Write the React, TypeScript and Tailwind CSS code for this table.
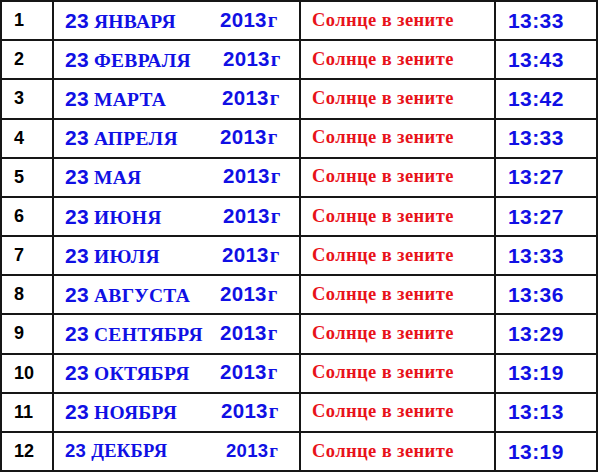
import React from "react";

type Row = { n: string; month: string; off: number; time: string };

const rows: Row[] = [
  { n: "1", month: "ЯНВАРЯ", off: 0, time: "13:33" },
  { n: "2", month: "ФЕВРАЛЯ", off: 3, time: "13:43" },
  { n: "3", month: "МАРТА", off: 2, time: "13:42" },
  { n: "4", month: "АПРЕЛЯ", off: 0, time: "13:33" },
  { n: "5", month: "МАЯ", off: 3, time: "13:27" },
  { n: "6", month: "ИЮНЯ", off: 3, time: "13:27" },
  { n: "7", month: "ИЮЛЯ", off: 2, time: "13:33" },
  { n: "8", month: "АВГУСТА", off: 0, time: "13:36" },
  { n: "9", month: "СЕНТЯБРЯ", off: 0, time: "13:29" },
  { n: "10", month: "ОКТЯБРЯ", off: 0, time: "13:19" },
  { n: "11", month: "НОЯБРЯ", off: 1, time: "13:13" },
];

const sans = "font-['Liberation_Sans',Arial,sans-serif]";
const serif = "font-['Liberation_Serif','Times_New_Roman',serif]";

export default function App() {
  return (
    <div className="w-[600px] h-[474px] bg-white">
      <div className="grid w-[598px] h-[472px] grid-cols-[50px_245px_193px_100px] grid-rows-[repeat(12,1fr)] gap-[2px] bg-[#161616] p-[2px]">
        {rows.map((r) => (
          <React.Fragment key={r.n}>
            <div className={`bg-white flex items-center pl-[12px] text-[18px] font-bold text-black ${sans}`}>
              {r.n}
            </div>
            <div className="bg-white flex items-center pl-[11px] text-[#1010e4] font-bold">
              <div className="w-[166px] shrink-0 flex items-baseline">
                <span className={`${sans} text-[21px] tracking-[0.3px]`}>23</span>
                <span className={`${serif} text-[19.5px] ml-[5px] tracking-[0.3px]`}>{r.month}</span>
              </div>
              <div className="flex items-baseline" style={{ marginLeft: r.off - 11 }}>
                <span className={`${sans} text-[20.5px] tracking-[0.3px]`}>2013</span>
                <span className={`${serif} text-[21px] ml-[1px]`}>г</span>
              </div>
            </div>
            <div className={`bg-white flex items-center pl-[11px] text-[18.5px] font-bold text-[#e8121a] ${serif} tracking-[0.4px]`}>
              Солнце в зените
            </div>
            <div className={`bg-white flex items-center pl-[12px] text-[21px] font-bold text-[#1010e4] ${sans} tracking-[0.4px]`}>
              {r.time}
            </div>
          </React.Fragment>
        ))}
        <div className={`bg-white flex items-center pl-[12px] text-[18px] font-bold text-black ${sans}`}>12</div>
        <div className="bg-white flex items-center pl-[11px] text-[#1010e4] font-bold">
          <div className="w-[172px] shrink-0 flex items-baseline">
            <span className={`${sans} text-[18.5px] tracking-[0.3px]`}>23</span>
            <span className={`${serif} text-[18.5px] ml-[5px] tracking-[0.3px]`}>ДЕКБРЯ</span>
          </div>
          <div className="flex items-baseline -ml-[11px]">
            <span className={`${sans} text-[18.5px] tracking-[0.3px]`}>2013</span>
            <span className={`${serif} text-[19px] ml-[1px]`}>г</span>
          </div>
        </div>
        <div className={`bg-white flex items-center pl-[11px] text-[18.5px] font-bold text-[#e8121a] ${serif} tracking-[0.4px]`}>
          Солнце в зените
        </div>
        <div className={`bg-white flex items-center pl-[12px] text-[21px] font-bold text-[#1010e4] ${sans} tracking-[0.4px]`}>
          13:19
        </div>
      </div>
    </div>
  );
}
